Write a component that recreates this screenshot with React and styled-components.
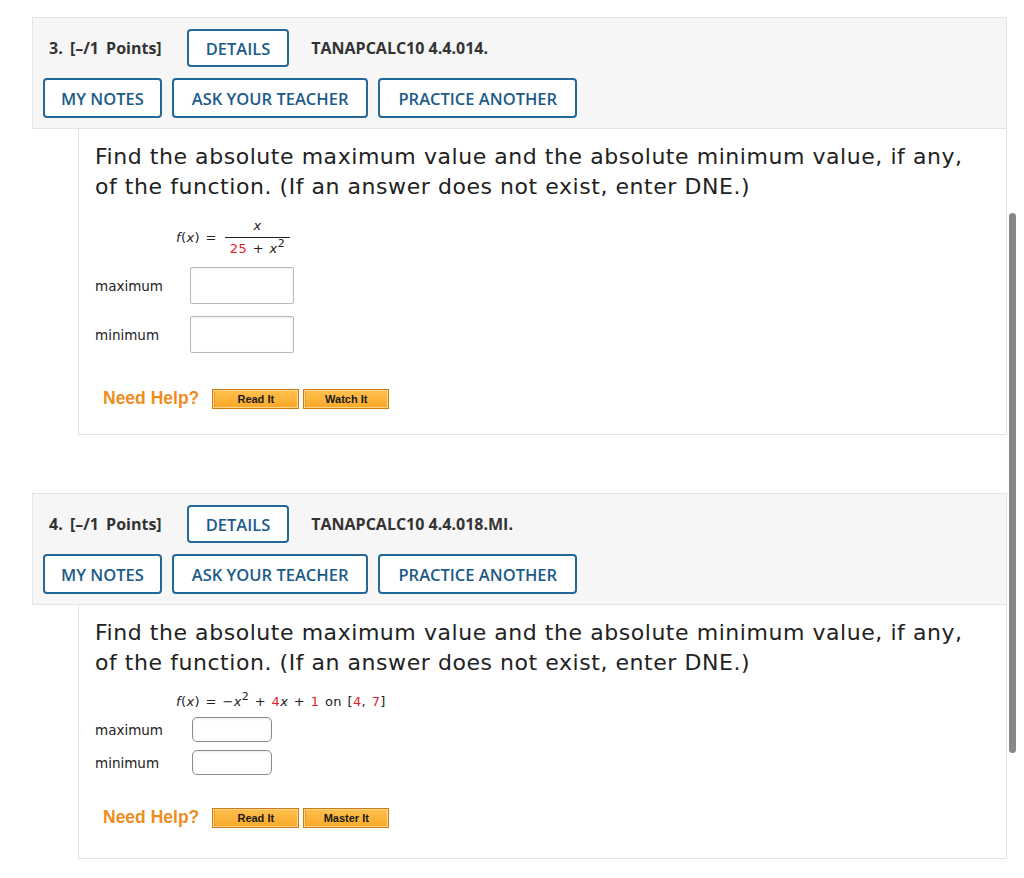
import React from 'react';
import styled, { createGlobalStyle } from 'styled-components';

const GlobalStyle = createGlobalStyle`
  html, body {
    margin: 0;
    padding: 0;
    background: #fff;
  }
  body {
    font-family: "Open Sans", "Liberation Sans", sans-serif;
  }
`;

const Page = styled.div`
  width: 975px;
  padding: 17px 0 0 32px;
  display: flex;
  flex-direction: column;
  gap: 58px;
`;

const Question = styled.section`
  display: flex;
  flex-direction: column;
`;

const Header = styled.div`
  background: #f6f6f6;
  border: 1px solid #e4e4e4;
  padding: 11px 0 10px 10px;
  display: flex;
  flex-direction: column;
  gap: 11px;
`;

const HeaderRow = styled.div`
  display: flex;
  align-items: center;
  gap: ${({ $gap }) => $gap || 10}px;
  padding-left: ${({ $indent }) => $indent || 0}px;
`;

const Points = styled.span`
  font-size: 16px;
  font-weight: 700;
  color: #333;
  word-spacing: 3px;
  margin-right: 15px;
`;

const Code = styled.span`
  font-size: 16px;
  font-weight: 700;
  color: #333;
  margin-left: 12px;
`;

const OutlineButton = styled.button`
  height: ${({ $h }) => $h || 40}px;
  padding: 0 ${({ $px }) => $px || 18}px;
  background: #fff;
  border: 2px solid #23689a;
  border-radius: 4px;
  color: #1c5b88;
  font-family: "Open Sans", "Liberation Sans", sans-serif;
  font-size: 16.5px;
  font-weight: 600;
  cursor: pointer;
`;

const Body = styled.div`
  margin-left: 46px;
  width: 929px;
  height: ${({ $h }) => $h}px;
  border: 1px solid #e2e2e2;
  border-top: none;
  padding: 13px 30px 0 16px;
  box-sizing: border-box;
  font-family: "DejaVu Sans", Verdana, "Open Sans", sans-serif;
  color: #222;
`;

const Prompt = styled.p`
  margin: 0;
  font-size: 22px;
  line-height: 30px;
  letter-spacing: 0.55px;
`;

const Formula = styled.div`
  margin: ${({ $mt }) => $mt}px 0 0 81px;
  font-size: 13px;
  letter-spacing: 0.4px;
  word-spacing: 1px;
  display: flex;
  align-items: center;
  gap: 8px;
  height: ${({ $h }) => $h}px;
  color: #222;
`;

const Frac = styled.span`
  display: inline-flex;
  flex-direction: column;
  align-items: center;
`;

const Num = styled.span`
  padding: 0 4px 4px;
  font-style: italic;
`;

const Den = styled.span`
  border-top: 1px solid #222;
  padding: 3px 5px 0;
`;

const Red = styled.span`
  color: #e3212b;
`;

const Var = styled.i``;

const Sup = styled.sup`
  font-size: 11px;
  vertical-align: 6px;
  line-height: 0;
`;

const Answers = styled.div`
  margin-top: ${({ $mt }) => $mt}px;
  display: flex;
  flex-direction: column;
  gap: ${({ $gap }) => $gap}px;
`;

const AnswerRow = styled.label`
  display: flex;
  align-items: center;
  font-size: 13.5px;
  color: #222;
`;

const AnswerLabel = styled.span`
  width: ${({ $w }) => $w}px;
`;

const AnswerBox = styled.input`
  box-sizing: border-box;
  width: ${({ $compact }) => ($compact ? 80 : 104)}px;
  height: ${({ $compact }) => ($compact ? 25 : 37)}px;
  border: 1px solid ${({ $compact }) => ($compact ? '#8c8c8c' : '#b9b9b9')};
  border-radius: ${({ $compact }) => ($compact ? 5 : 2)}px;
  background: #fff;
  box-shadow: inset 0 1px 2px rgba(0, 0, 0, 0.08);
  outline: none;
`;

const Help = styled.div`
  margin: ${({ $mt }) => $mt}px 0 0 8px;
  display: flex;
  align-items: center;
  gap: 4px;
`;

const HelpText = styled.span`
  font-family: Arial, "Liberation Sans", sans-serif;
  font-weight: bold;
  font-size: 17.5px;
  color: #ee8d1f;
  margin-right: 9px;
`;

const HelpButton = styled.button`
  width: ${({ $w }) => $w || 87}px;
  height: 20px;
  padding: 0;
  background: linear-gradient(#ffc04f, #f9a826);
  border: 1px solid #cf7a12;
  box-shadow: inset 0 0 0 1px #ffd68a, inset 2px 0 0 #e89a2a;
  font-family: Arial, "Liberation Sans", sans-serif;
  font-weight: bold;
  font-size: 11px;
  color: #1a1a1a;
  cursor: pointer;
`;

const ScrollThumb = styled.div`
  position: fixed;
  top: 213px;
  right: 8px;
  width: 7px;
  height: 540px;
  border-radius: 4px;
  background: #888;
`;

const QuestionHeader = ({ number, code }) => (
  <Header>
    <HeaderRow $indent={6}>
      <Points>{number}. [–/1 Points]</Points>
      <OutlineButton $h={38} $px={17}>DETAILS</OutlineButton>
      <Code>{code}</Code>
    </HeaderRow>
    <HeaderRow $gap={10}>
      <OutlineButton $px={16}>MY NOTES</OutlineButton>
      <OutlineButton>ASK YOUR TEACHER</OutlineButton>
      <OutlineButton>PRACTICE ANOTHER</OutlineButton>
    </HeaderRow>
  </Header>
);

const PROMPT =
  'Find the absolute maximum value and the absolute minimum value, if any, of the function. (If an answer does not exist, enter DNE.)';

export default function App() {
  return (
    <>
      <GlobalStyle />
      <Page>
        <Question>
          <QuestionHeader number={3} code="TANAPCALC10 4.4.014." />
          <Body $h={306}>
            <Prompt>{PROMPT}</Prompt>
            <Formula $mt={12} $h={46}>
              <span>
                <Var>f</Var>(<Var>x</Var>) =
              </span>
              <Frac>
                <Num>x</Num>
                <Den>
                  <Red>25</Red> + <Var>x</Var>
                  <Sup>2</Sup>
                </Den>
              </Frac>
            </Formula>
            <Answers $mt={7} $gap={12}>
              <AnswerRow>
                <AnswerLabel $w={95}>maximum</AnswerLabel>
                <AnswerBox />
              </AnswerRow>
              <AnswerRow>
                <AnswerLabel $w={95}>minimum</AnswerLabel>
                <AnswerBox />
              </AnswerRow>
            </Answers>
            <Help $mt={35}>
              <HelpText>Need Help?</HelpText>
              <HelpButton>Read It</HelpButton>
              <HelpButton $w={86}>Watch It</HelpButton>
            </Help>
          </Body>
        </Question>

        <Question>
          <QuestionHeader number={4} code="TANAPCALC10 4.4.018.MI." />
          <Body $h={254}>
            <Prompt>{PROMPT}</Prompt>
            <Formula $mt={14} $h={18}>
              <span>
                <Var>f</Var>(<Var>x</Var>) = −<Var>x</Var>
                <Sup>2</Sup> + <Red>4</Red>
                <Var>x</Var> + <Red>1</Red> on [<Red>4</Red>, <Red>7</Red>]
              </span>
            </Formula>
            <Answers $mt={7} $gap={8}>
              <AnswerRow>
                <AnswerLabel $w={97}>maximum</AnswerLabel>
                <AnswerBox $compact />
              </AnswerRow>
              <AnswerRow>
                <AnswerLabel $w={97}>minimum</AnswerLabel>
                <AnswerBox $compact />
              </AnswerRow>
            </Answers>
            <Help $mt={32}>
              <HelpText>Need Help?</HelpText>
              <HelpButton>Read It</HelpButton>
              <HelpButton $w={86}>Master It</HelpButton>
            </Help>
          </Body>
        </Question>
      </Page>
      <ScrollThumb />
    </>
  );
}
